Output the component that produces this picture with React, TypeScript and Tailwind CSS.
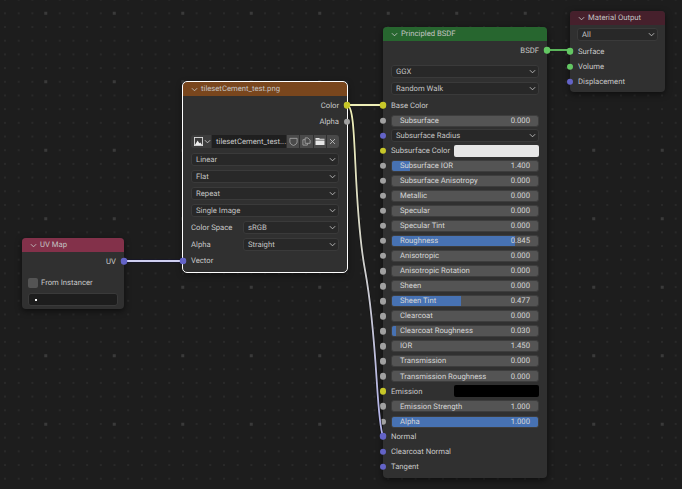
import React from "react";

type Socket = "gray" | "yellow" | "blue" | "green";

const socketColors: Record<Socket, string> = {
  gray: "bg-[#a1a1a1]",
  yellow: "bg-[#c7c729]",
  blue: "bg-[#6363c7]",
  green: "bg-[#63c763]",
};

const Chevron = ({ className = "" }: { className?: string }) => (
  <svg viewBox="0 0 8 5" className={`w-[7px] h-[5px] shrink-0 ${className}`} fill="none">
    <path d="M1 1l3 3 3-3" stroke="currentColor" strokeWidth="1" />
  </svg>
);

const Dot = ({ color, side }: { color: Socket; side: "left" | "right" }) => (
  <span
    className={`absolute top-1/2 -translate-y-1/2 w-[6.500px] h-[6.500px] rounded-full ${socketColors[color]} ${
      side === "left" ? "left-[-3.250px]" : "right-[-3.250px]"
    }`}
  />
);

const Row = ({
  h = "h-[15.05px]",
  left,
  right,
  children,
}: {
  h?: string;
  left?: Socket;
  right?: Socket;
  children?: React.ReactNode;
}) => (
  <div className={`relative flex items-center px-[8px] ${h}`}>
    {left && <Dot color={left} side="left" />}
    {right && <Dot color={right} side="right" />}
    {children}
  </div>
);

const Select = ({ label, className = "" }: { label: string; className?: string }) => (
  <div
    className={`flex flex-1 items-center justify-between h-[13px] rounded-[3px] bg-[#282828] border border-[#3a3a3a] pl-[4px] pr-[2px] text-[#c4c4c4] ${className}`}
  >
    <span>{label}</span>
    <Chevron />
  </div>
);

const Slider = ({ label, value, fill = 0 }: { label: string; value: string; fill?: number }) => (
  <div className="relative flex flex-1 items-center justify-between h-[12px] rounded-[3px] bg-[#545454] border border-[#3d3d3d] px-[8px] overflow-hidden text-[#d6d6d6]">
    {fill > 0 && (
      <span className="absolute left-0 top-0 bottom-0 bg-[#4772b3]" style={{ width: `${fill}%` }} />
    )}
    <span className="relative">{label}</span>
    <span className="relative">{value}</span>
  </div>
);

const Node = ({
  title,
  header,
  className,
  selected,
  children,
}: {
  title: string;
  header: string;
  className: string;
  selected?: boolean;
  children: React.ReactNode;
}) => (
  <div
    className={`absolute rounded-[4px] bg-[#303030] shadow-[0_2px_6px_rgba(0,0,0,0.55)] ${
      selected ? "outline outline-1 outline-white" : ""
    } ${className}`}
  >
    <div className={`flex items-center gap-[3px] h-[14px] pl-[8px] rounded-t-[4px] text-[#c4c4c4] ${header}`}>
      <Chevron />
      <span>{title}</span>
    </div>
    {children}
  </div>
);

const sliderRow = (label: string, value: string, fill = 0) => (
  <Row left="gray" key={label}>
    <Slider label={label} value={value} fill={fill} />
  </Row>
);

export default function App() {
  return (
    <div className="relative w-[682px] h-[489px] overflow-hidden bg-[#1d1d1d] bg-[radial-gradient(circle,#3a3a3a_1.4px,transparent_1.6px),radial-gradient(circle,#292929_0.8px,transparent_1px)] bg-[size:68.5px_68.5px,13.7px_13.7px] bg-[position:11.5px_-21px,-1.850px_6.500px] font-['Roboto',sans-serif] text-[7.7px] leading-none text-[#c8c8c8] [text-rendering:geometricPrecision]">
      {/* UV Map */}
      <Node title="UV Map" header="bg-[#83314a]" className="left-[22px] top-[238px] w-[102px] h-[71px]">
        <Row right="blue" h="h-[19px]">
          <span className="ml-auto">UV</span>
        </Row>
        <div className="flex items-center gap-[3px] px-[6px] mt-[5px] h-[13px]">
          <span className="w-[10px] h-[10px] rounded-[2px] bg-[#545454]" />
          <span>From Instancer</span>
        </div>
        <div className="mx-[6px] mt-[4px] flex items-center h-[13px] rounded-[3px] bg-[#1d1d1d] border border-[#3a3a3a] pl-[6px]">
          <span className="w-[2px] h-[2px] bg-white" />
        </div>
      </Node>

      {/* image texture */}
      <Node selected title="tilesetCement_test.png" header="bg-[#79461d]" className="left-[183px] top-[82px] w-[164px] h-[190px]">
        <Row right="yellow" h="h-[19px]">
          <span className="ml-auto">Color</span>
        </Row>
        <Row right="gray" h="h-[13px]">
          <span className="ml-auto">Alpha</span>
        </Row>
        <div className="flex items-center gap-[1px] h-[13px] mx-[8px] mt-[7px]">
          <div className="flex items-center gap-[1px] w-[20px] h-full bg-[#3c3c3c] rounded-l-[3px] pl-[3px]">
            <svg viewBox="0 0 10 10" className="w-[9px] h-[9px] shrink-0">
              <rect x="0.5" y="0.5" width="9" height="9" fill="none" stroke="#ddd" />
              <path d="M1 9l3-5 2 3 1-1 2 3z" fill="#eee" />
            </svg>
            <Chevron />
          </div>
          <div className="flex-1 h-full bg-[#1f1f1f] flex items-center pl-[4px] whitespace-nowrap">tilesetCement_test...</div>
          <div className="flex items-center justify-center w-[13px] h-full bg-[#4a4a4a]">
            <svg viewBox="0 0 10 10" className="w-[9px] h-[9px]" fill="none">
              <path d="M1 1.500h8v4c0 2-2 3-4 4-2-1-4-2-4-4z" stroke="#a0a0a0" />
            </svg>
          </div>
          <div className="flex items-center justify-center w-[13px] h-full bg-[#4a4a4a]">
            <svg viewBox="0 0 10 10" className="w-[9px] h-[9px]" fill="none">
              <path d="M3.500 1h3l2.500 2.500V7H3.500zM3.500 3H1v6h5V7" stroke="#a0a0a0" />
            </svg>
          </div>
          <div className="flex items-center justify-center w-[13px] h-full bg-[#4a4a4a]">
            <svg viewBox="0 0 10 10" className="w-[10px] h-[9px]">
              <path d="M0 1h4l1 1h5v1H0zM0 4h10v5H0z" fill="#e6e6e6" />
            </svg>
          </div>
          <div className="flex items-center justify-center w-[13px] h-full bg-[#4a4a4a] rounded-r-[3px]">
            <svg viewBox="0 0 10 10" className="w-[7px] h-[7px]" fill="none">
              <path d="M1.500 1.500l7 7m0-7l-7 7" stroke="#c4c4c4" strokeWidth="1.200" />
            </svg>
          </div>
        </div>
        <div className="flex flex-col gap-[4px] px-[8px] mt-[5px]">
          <div className="flex"><Select label="Linear" /></div>
          <div className="flex"><Select label="Flat" /></div>
          <div className="flex"><Select label="Repeat" /></div>
          <div className="flex"><Select label="Single Image" /></div>
          <div className="flex items-center">
            <span className="w-[52px]">Color Space</span>
            <Select label="sRGB" />
          </div>
          <div className="flex items-center">
            <span className="w-[52px]">Alpha</span>
            <Select label="Straight" />
          </div>
        </div>
        <Row left="blue" h="h-[19px]">
          <span>Vector</span>
        </Row>
      </Node>

      {/* Principled */}
      <Node title="Principled BSDF" header="bg-[#27662f]" className="left-[383px] top-[27px] w-[164px] h-[451px]">
        <Row right="green" h="h-[19px]">
          <span className="ml-auto">BSDF</span>
        </Row>
        <div className="flex flex-col gap-[4px] px-[8px] mt-[5px]">
          <div className="flex"><Select label="GGX" /></div>
          <div className="flex"><Select label="Random Walk" /></div>
        </div>
        <div className="mt-[3px]">
          <Row left="yellow">
            <span>Base Color</span>
          </Row>
        </div>
        {sliderRow("Subsurface", "0.000")}
        <Row left="blue">
          <Select label="Subsurface Radius" />
        </Row>
        <Row left="yellow">
          <span className="w-[63px] whitespace-nowrap">Subsurface Color</span>
          <span className="flex-1 h-[12px] rounded-[2px] bg-[#e6e6e6]" />
        </Row>
        {sliderRow("Subsurface IOR", "1.400", 12)}
        {sliderRow("Subsurface Anisotropy", "0.000")}
        {sliderRow("Metallic", "0.000")}
        {sliderRow("Specular", "0.000")}
        {sliderRow("Specular Tint", "0.000")}
        {sliderRow("Roughness", "0.845", 84.5)}
        {sliderRow("Anisotropic", "0.000")}
        {sliderRow("Anisotropic Rotation", "0.000")}
        {sliderRow("Sheen", "0.000")}
        {sliderRow("Sheen Tint", "0.477", 47)}
        {sliderRow("Clearcoat", "0.000")}
        {sliderRow("Clearcoat Roughness", "0.030", 3)}
        {sliderRow("IOR", "1.450")}
        {sliderRow("Transmission", "0.000")}
        {sliderRow("Transmission Roughness", "0.000")}
        <Row left="yellow">
          <span className="w-[63px]">Emission</span>
          <span className="flex-1 h-[12px] rounded-[2px] bg-black" />
        </Row>
        {sliderRow("Emission Strength", "1.000")}
        {sliderRow("Alpha", "1.000", 100)}
        <Row left="blue"><span>Normal</span></Row>
        <Row left="blue"><span>Clearcoat Normal</span></Row>
        <Row left="blue"><span>Tangent</span></Row>
      </Node>

      {/* Material Output */}
      <Node title="Material Output" header="bg-[#46202c]" className="left-[570px] top-[11px] w-[95px] h-[81px]">
        <div className="flex px-[7px] mt-[3px]"><Select label="All" /></div>
        <div className="mt-[3px]">
          <Row left="green"><span>Surface</span></Row>
          <Row left="green"><span>Volume</span></Row>
          <Row left="blue"><span>Displacement</span></Row>
        </div>
      </Node>

      {/* wires */}
      <svg className="absolute inset-0 w-[682px] h-[489px] pointer-events-none" viewBox="0 0 682 489" fill="none">
        <defs>
          <linearGradient id="yb" x1="347" y1="105" x2="383" y2="436" gradientUnits="userSpaceOnUse">
            <stop offset="0" stopColor="#eeeeb4" />
            <stop offset="1" stopColor="#b0b0ea" />
          </linearGradient>
        </defs>
        <path d="M124 261H183" stroke="#16162a" strokeWidth="3.500" />
        <path d="M124 261H183" stroke="#cfcff0" strokeWidth="1.800" />
        <path d="M347 105C358 105 352 200 365 270S376 420 383 436" stroke="#111" strokeWidth="3" />
        <path d="M347 105C358 105 352 200 365 270S376 420 383 436" stroke="url(#yb)" strokeWidth="1.800" />
        <path d="M347 105H383" stroke="#222" strokeWidth="3.500" />
        <path d="M347 105H383" stroke="#f0f0b8" strokeWidth="1.800" />
        <path d="M547 50H570" stroke="#63c763" strokeWidth="1.800" />
        <circle cx="124" cy="261" r="3.250" fill="#6363c7" />
        <circle cx="183" cy="261" r="3.250" fill="#6363c7" />
        <circle cx="347" cy="105" r="3.250" fill="#c7c729" />
        <circle cx="383" cy="105" r="3.250" fill="#c7c729" />
        <circle cx="383" cy="436" r="3.250" fill="#6363c7" />
        <circle cx="547" cy="50" r="3.250" fill="#63c763" />
        <circle cx="570" cy="51" r="3.250" fill="#63c763" />
      </svg>
    </div>
  );
}
